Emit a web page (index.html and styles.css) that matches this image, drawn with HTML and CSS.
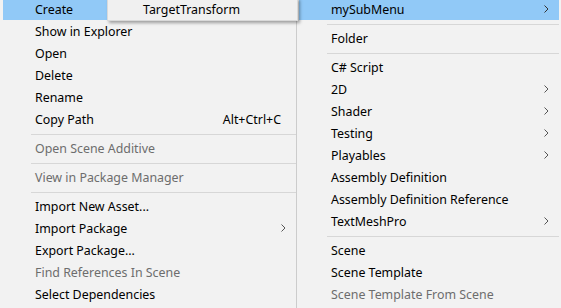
FILE: index.html
```html
<!DOCTYPE html>
<html>
<head>
<meta charset="utf-8">
<link rel="stylesheet" href="styles.css">
</head>
<body>
<div class="screen">
  <div class="menu menu-left">
    <div class="item active"><span class="label">Create</span></div>
    <div class="item"><span class="label">Show in Explorer</span></div>
    <div class="item"><span class="label">Open</span></div>
    <div class="item"><span class="label">Delete</span></div>
    <div class="item"><span class="label">Rename</span></div>
    <div class="item"><span class="label">Copy Path</span><span class="shortcut">Alt+Ctrl+C</span></div>
    <div class="sep"></div>
    <div class="item disabled"><span class="label">Open Scene Additive</span></div>
    <div class="sep"></div>
    <div class="item disabled"><span class="label">View in Package Manager</span></div>
    <div class="sep"></div>
    <div class="item"><span class="label">Import New Asset...</span></div>
    <div class="item"><span class="label">Import Package</span><svg class="arrow" width="5" height="8" viewBox="0 0 5 8"><polyline points="0.5,0.5 4,4 0.5,7.5" fill="none" stroke="#555" stroke-width="1"/></svg></div>
    <div class="item"><span class="label">Export Package...</span></div>
    <div class="item disabled"><span class="label">Find References In Scene</span></div>
    <div class="item"><span class="label">Select Dependencies</span></div>
  </div>
  <div class="menu menu-right">
    <div class="item active"><span class="label">mySubMenu</span><svg class="arrow" width="5" height="8" viewBox="0 0 5 8"><polyline points="0.5,0.5 4,4 0.5,7.5" fill="none" stroke="#333" stroke-width="1"/></svg></div>
    <div class="sep"></div>
    <div class="item"><span class="label">Folder</span></div>
    <div class="sep"></div>
    <div class="item"><span class="label">C# Script</span></div>
    <div class="item"><span class="label">2D</span><svg class="arrow" width="5" height="8" viewBox="0 0 5 8"><polyline points="0.5,0.5 4,4 0.5,7.5" fill="none" stroke="#555" stroke-width="1"/></svg></div>
    <div class="item"><span class="label">Shader</span><svg class="arrow" width="5" height="8" viewBox="0 0 5 8"><polyline points="0.5,0.5 4,4 0.5,7.5" fill="none" stroke="#555" stroke-width="1"/></svg></div>
    <div class="item"><span class="label">Testing</span><svg class="arrow" width="5" height="8" viewBox="0 0 5 8"><polyline points="0.5,0.5 4,4 0.5,7.5" fill="none" stroke="#555" stroke-width="1"/></svg></div>
    <div class="item"><span class="label">Playables</span><svg class="arrow" width="5" height="8" viewBox="0 0 5 8"><polyline points="0.5,0.5 4,4 0.5,7.5" fill="none" stroke="#555" stroke-width="1"/></svg></div>
    <div class="item"><span class="label">Assembly Definition</span></div>
    <div class="item"><span class="label">Assembly Definition Reference</span></div>
    <div class="item"><span class="label">TextMeshPro</span><svg class="arrow" width="5" height="8" viewBox="0 0 5 8"><polyline points="0.5,0.5 4,4 0.5,7.5" fill="none" stroke="#555" stroke-width="1"/></svg></div>
    <div class="sep"></div>
    <div class="item"><span class="label">Scene</span></div>
    <div class="item"><span class="label">Scene Template</span></div>
    <div class="item disabled"><span class="label">Scene Template From Scene</span></div>
  </div>
  <div class="tooltip">TargetTransform</div>
</div>
</body>
</html>
```

FILE: styles.css
```css
html, body {
  margin: 0;
  padding: 0;
  background: #f0f0f0;
  overflow: hidden;
}
.screen {
  position: relative;
  width: 561px;
  height: 308px;
  display: flex;
  font-family: "Noto Sans", "Open Sans", sans-serif;
  font-size: 12.4px;
  color: #000;
  background: #f0f0f0;
}
.menu {
  display: flex;
  flex-direction: column;
  background: #f2f2f2;
  margin-top: -2px;
}
.menu-left {
  width: 293px;
  padding-left: 3px;
  border-right: 1px solid #cccccc;
}
.menu-right {
  flex: 1;
  padding-left: 2px;
  padding-right: 2px;
}
.item {
  height: 22px;
  flex: none;
  display: flex;
  align-items: center;
  padding-left: 32px;
  padding-right: 10px;
  white-space: nowrap;
}
.item.active {
  background: #91c9f7;
}
.item.disabled {
  color: #6d6d6d;
}
.label {
  flex: 1;
}
.shortcut {
  padding-right: 5px;
}
.arrow {
  flex: none;
}
.sep {
  flex: none;
  height: 7px;
  margin-left: 28px;
  box-sizing: border-box;
  padding-top: 4px;
}
.sep::before {
  content: "";
  display: block;
  height: 1px;
  background: #d7d7d7;
}
.tooltip {
  position: absolute;
  left: 107px;
  top: -2px;
  width: 154px;
  height: 21px;
  padding-left: 35px;
  display: flex;
  align-items: center;
  background: #f0f0f0;
  border: 1px solid #d9d9d9;
  box-shadow: 2px 2px 3px rgba(0, 0, 0, 0.35);
}
```
